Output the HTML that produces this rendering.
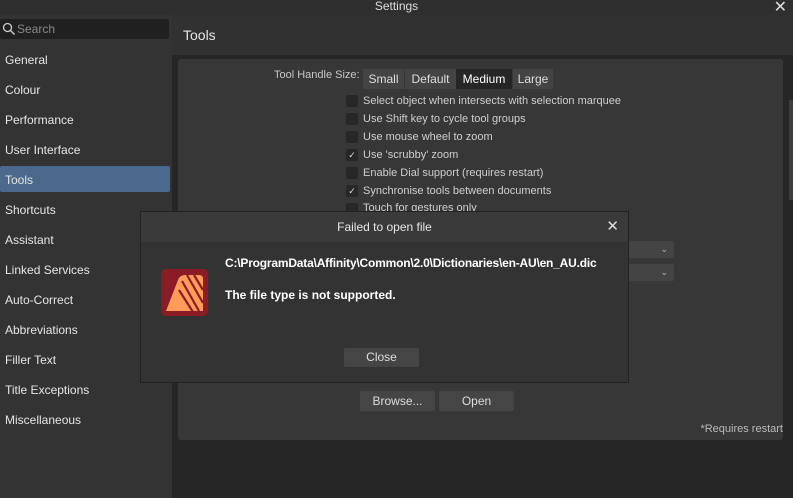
<!DOCTYPE html>
<html><head><meta charset="utf-8"><style>
*{margin:0;padding:0;box-sizing:border-box}
body{width:793px;height:498px;background:#262626;font-family:"Liberation Sans",sans-serif;font-size:12px;color:#ddd;position:relative;overflow:hidden}
.abs{position:absolute}
.title{left:0;top:0;width:793px;height:15px;background:#2f2f2f;text-align:center;font-size:12px;line-height:12px;color:#ddd}
.side{left:0;top:15px;width:172px;height:483px;background:#333}
.search{left:0;top:19px;width:169px;height:20px;background:#202020;border-radius:2px;color:#888;padding-left:17px;line-height:20px}
.item{left:5px;font-size:12px;color:#e6e6e6}
.sel{left:0;top:166px;width:170px;height:26px;background:#4a698c;border-radius:2px}
.hdr{left:172px;top:15px;width:621px;height:40px;background:#313131}
.panel{left:178px;top:59px;width:605px;height:381px;background:#373737;border-radius:3px}
.cb{width:12px;height:12px;background:#272727;border-radius:2px;left:346px}
.cl{left:363px;color:#cfcfcf;font-size:11px}
.seg{top:69px;height:20px;background:#444;line-height:20px;text-align:center;color:#ddd;font-size:12px}
.btn{background:#454545;border-radius:2px;text-align:center;color:#ddd;font-size:12px}
.dlg{left:140px;top:211px;width:489px;height:172px;background:#333;border:1px solid #222}
</style></head><body>
<div class="abs title">Settings</div>
<div class="abs" style="right:6px;top:-3px;font-size:16px;color:#ddd">✕</div>
<div class="abs side"></div>
<div class="abs search">Search</div>
<svg class="abs" style="left:2px;top:22px" width="14" height="14"><circle cx="5.5" cy="5.5" r="4" fill="none" stroke="#ccc" stroke-width="1.3"/><line x1="8.5" y1="8.5" x2="12.5" y2="12.5" stroke="#ccc" stroke-width="1.4"/></svg>
<div class="abs sel"></div>
<div class="abs item" style="top:53px">General</div>
<div class="abs item" style="top:83px">Colour</div>
<div class="abs item" style="top:113px">Performance</div>
<div class="abs item" style="top:143px">User Interface</div>
<div class="abs item" style="top:173px">Tools</div>
<div class="abs item" style="top:203px">Shortcuts</div>
<div class="abs item" style="top:233px">Assistant</div>
<div class="abs item" style="top:263px">Linked Services</div>
<div class="abs item" style="top:293px">Auto-Correct</div>
<div class="abs item" style="top:323px">Abbreviations</div>
<div class="abs item" style="top:353px">Filler Text</div>
<div class="abs item" style="top:383px">Title Exceptions</div>
<div class="abs item" style="top:413px">Miscellaneous</div>
<div class="abs hdr"></div>
<div class="abs" style="left:183px;top:27px;font-size:14px;color:#e6e6e6">Tools</div>
<div class="abs" style="left:789px;top:100px;width:4px;height:100px;background:#3e3e3e"></div>
<div class="abs panel"></div>
<div class="abs" style="left:274px;top:69px;color:#c8c8c8;font-size:11px">Tool Handle Size:</div>
<div class="abs seg" style="left:363px;width:41px">Small</div>
<div class="abs seg" style="left:405px;width:51px">Default</div>
<div class="abs seg" style="left:456px;width:56px;background:#262626;color:#fff">Medium</div>
<div class="abs seg" style="left:513px;width:40px">Large</div>
<div class="abs cb" style="top:95px"></div><div class="abs cl" style="top:95px">Select object when intersects with selection marquee</div>
<div class="abs cb" style="top:113px"></div><div class="abs cl" style="top:113px">Use Shift key to cycle tool groups</div>
<div class="abs cb" style="top:131px"></div><div class="abs cl" style="top:131px">Use mouse wheel to zoom</div>
<div class="abs cb" style="top:149px;color:#ddd;font-size:9px;text-align:center;line-height:12px">✓</div><div class="abs cl" style="top:149px">Use 'scrubby' zoom</div>
<div class="abs cb" style="top:167px"></div><div class="abs cl" style="top:167px">Enable Dial support (requires restart)</div>
<div class="abs cb" style="top:185px;color:#ddd;font-size:9px;text-align:center;line-height:12px">✓</div><div class="abs cl" style="top:185px">Synchronise tools between documents</div>
<div class="abs cb" style="top:203px"></div><div class="abs cl" style="top:202px">Touch for gestures only</div>
<div class="abs" style="left:600px;top:241px;width:74px;height:17px;background:#444;border-radius:2px;color:#bbb;text-align:right;padding-right:6px;font-size:9px;line-height:17px">⌄</div>
<div class="abs" style="left:600px;top:264px;width:74px;height:17px;background:#444;border-radius:2px;color:#bbb;text-align:right;padding-right:6px;font-size:9px;line-height:17px">⌄</div>
<div class="abs btn" style="left:360px;top:391px;width:75px;height:20px;line-height:20px">Browse...</div>
<div class="abs btn" style="left:439px;top:391px;width:75px;height:20px;line-height:20px">Open</div>
<div class="abs" style="right:10px;top:423px;color:#bbb;font-size:11px">*Requires restart</div>
<div class="abs dlg">
 <div class="abs" style="left:0;top:0;width:487px;height:30px;background:#3a3a3a;text-align:center;line-height:30px;font-size:12px;color:#e6e6e6">Failed to open file</div>
 <div class="abs" style="right:9px;top:5px;font-size:15px;color:#ddd">✕</div>
 <svg class="abs" style="left:19px;top:56px" width="49" height="49" viewBox="0 0 49 49">
  <rect x="1" y="1" width="47" height="47" rx="5" fill="#8a1c26"/>
  <path d="M6 43 L18 12 Q20 7 25 7 L39 7 Q43 7 43 11 L43 43 Z" fill="#ff9b58"/>
  <g stroke="#8a1c26" stroke-width="2.2"><line x1="19" y1="22" x2="33" y2="44"/><line x1="22" y1="13" x2="39" y2="43"/><line x1="27" y1="7" x2="43" y2="35"/><line x1="34" y1="7" x2="43" y2="22"/></g>
 </svg>
 <div class="abs" style="left:84px;top:44px;font-weight:bold;color:#fff;font-size:12px;letter-spacing:-0.2px">C:\ProgramData\Affinity\Common\2.0\Dictionaries\en-AU\en_AU.dic</div>
 <div class="abs" style="left:84px;top:76px;font-weight:bold;color:#fff;font-size:12px">The file type is not supported.</div>
 <div class="abs btn" style="left:203px;top:136px;width:75px;height:19px;line-height:19px">Close</div>
</div>
</body></html>
